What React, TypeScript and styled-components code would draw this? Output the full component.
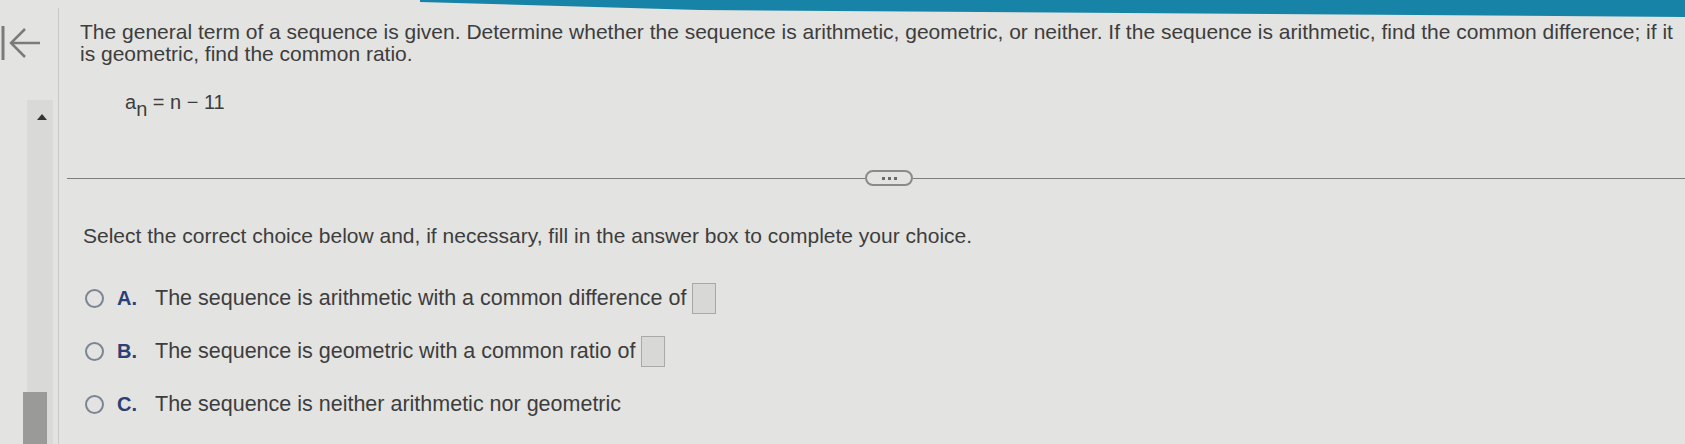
import React from 'react';
import styled, { createGlobalStyle } from 'styled-components';

const GlobalStyle = createGlobalStyle`
  html, body {
    margin: 0;
    padding: 0;
    background-color: #e3e3e1;
  }
  body {
    font-family: "Liberation Sans", Arial, sans-serif;
    color: #3d3d3d;
  }
`;

// Estructura
const Page = styled.div`
  width: 1685px;
  height: 444px;
  display: flex;
  flex-direction: column;
  overflow: hidden;
  background-color: #e3e3e1;
`;

const TopBar = styled.div`
  height: 17px;
  flex-shrink: 0;
  background-color: #1783a6;
  clip-path: polygon(420px 0, 100% 0, 100% 100%, 700px 10px, 420px 2px);
  margin-bottom: -9px;
`;

const Body = styled.div`
  flex: 1;
  display: flex;
  min-height: 0;
`;

const Sidebar = styled.div`
  width: 58px;
  flex-shrink: 0;
  border-right: 1px solid #c9c9c7;
  display: flex;
  flex-direction: column;
`;

const BackButton = styled.div`
  height: 42px;
  margin-top: 14px;
  display: flex;
  align-items: center;
`;

const ScrollTrack = styled.div`
  flex: 1;
  margin-top: 36px;
  margin-left: 27px;
  width: 26px;
  background-color: #d9d9d7;
  display: flex;
  flex-direction: column;
  justify-content: space-between;
`;

const UpArrow = styled.div`
  width: 0;
  height: 0;
  margin: 14px 0 0 10px;
  border-left: 5px solid transparent;
  border-right: 5px solid transparent;
  border-bottom: 6px solid #333;
`;

const ScrollThumb = styled.div`
  width: 24px;
  height: 52px;
  margin-left: -4px;
  background-color: #9a9a98;
`;

const Main = styled.div`
  flex: 1;
  min-width: 0;
  padding: 13px 0 0 21px;
  display: flex;
  flex-direction: column;
`;

const Prompt = styled.p`
  margin: 0;
  font-size: 21px;
  line-height: 22px;
`;

const Formula = styled.div`
  margin: 26px 0 0 45px;
  font-size: 20px;
  line-height: 22px;

  sub {
    font-size: 20px;
    vertical-align: -7px;
    line-height: 0;
  }
`;

const DividerRow = styled.div`
  margin: 57px 0 0 -13px;
  display: flex;
  align-items: center;
`;

const Line = styled.div<{ $width?: number }>`
  flex: ${props => (props.$width ? `0 0 ${props.$width}px` : '1')};
  height: 1px;
  background-color: #7e7e7c;
`;

const MorePill = styled.div`
  width: 44px;
  height: 12px;
  border: 2px solid #8a8a88;
  border-radius: 8px;
  display: flex;
  align-items: center;
  justify-content: center;
  gap: 3px;
`;

const Dot = styled.span`
  width: 3px;
  height: 3px;
  background-color: #6a6a68;
`;

const Instruction = styled.p`
  margin: 38px 0 0 3px;
  font-size: 21px;
  line-height: 24px;
`;

const Choices = styled.div`
  margin-top: 34px;
  display: flex;
  flex-direction: column;
  gap: 21px;
`;

const Choice = styled.div`
  display: flex;
  align-items: center;
  height: 32px;
  margin-left: 5px;
`;

const Radio = styled.span`
  width: 15px;
  height: 15px;
  border: 2px solid #7c8595;
  border-radius: 50%;
  flex-shrink: 0;
`;

const Letter = styled.span`
  width: 38px;
  margin-left: 13px;
  font-size: 20px;
  font-weight: bold;
  color: #2c3f78;
`;

const ChoiceText = styled.span`
  font-size: 21.5px;
  line-height: 24px;
  display: flex;
  align-items: center;
`;

const AnswerBox = styled.span`
  display: inline-block;
  width: 22px;
  height: 29px;
  margin-left: 6px;
  border: 1px solid #a9a9a7;
  background-color: #d8d8d6;
`;

const choices = [
  { letter: 'A.', text: 'The sequence is arithmetic with a common difference of', box: true },
  { letter: 'B.', text: 'The sequence is geometric with a common ratio of', box: true },
  { letter: 'C.', text: 'The sequence is neither arithmetic nor geometric', box: false },
];

const App: React.FC = () => {
  return (
    <>
      <GlobalStyle />
      <Page>
        <TopBar />
        <Body>
          <Sidebar>
            <BackButton>
              <svg width="42" height="42" viewBox="0 0 42 42">
                <line x1="3" y1="4" x2="3" y2="38" stroke="#7a7a78" strokeWidth="3" />
                <line x1="11" y1="21" x2="40" y2="21" stroke="#7a7a78" strokeWidth="2.5" />
                <polyline points="25,7 11,21 25,35" fill="none" stroke="#7a7a78" strokeWidth="2.5" />
              </svg>
            </BackButton>
            <ScrollTrack>
              <UpArrow />
              <ScrollThumb />
            </ScrollTrack>
          </Sidebar>

          <Main>
            <Prompt>
              The general term of a sequence is given. Determine whether the sequence is arithmetic,
              geometric, or neither. If the sequence is arithmetic, find the common difference; if it
              is geometric, find the common ratio.
            </Prompt>

            <Formula>
              a<sub>n</sub> = n − 11
            </Formula>

            <DividerRow>
              <Line $width={798} />
              <MorePill>
                <Dot />
                <Dot />
                <Dot />
              </MorePill>
              <Line />
            </DividerRow>

            <Instruction>
              Select the correct choice below and, if necessary, fill in the answer box to complete your choice.
            </Instruction>

            <Choices>
              {choices.map(c => (
                <Choice key={c.letter}>
                  <Radio />
                  <Letter>{c.letter}</Letter>
                  <ChoiceText>
                    {c.text}
                    {c.box && <AnswerBox />}
                  </ChoiceText>
                </Choice>
              ))}
            </Choices>
          </Main>
        </Body>
      </Page>
    </>
  );
};

export default App;
